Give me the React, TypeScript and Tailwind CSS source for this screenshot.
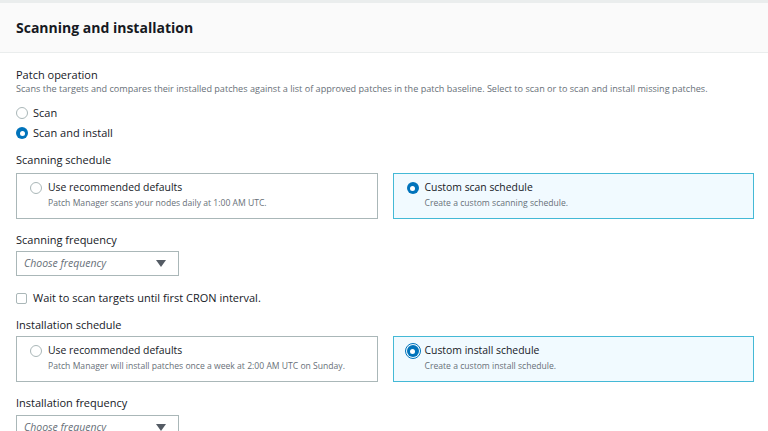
import React from "react";

function Radio({ on, focus }: { on?: boolean; focus?: boolean }) {
  if (on)
    return (
      <span className={`flex shrink-0 items-center justify-center rounded-full ${focus ? "w-[16px] h-[16px] -mx-[2px] border-[1.5px] border-[#0073bb]" : "w-[12px] h-[12px]"}`}>
        <span className="w-[12px] h-[12px] rounded-full bg-[#0073bb] flex items-center justify-center">
          <span className="w-[5px] h-[5px] rounded-full bg-white" />
        </span>
      </span>
    );
  return <span className="w-[12px] h-[12px] shrink-0 rounded-full border border-[#aab7b8] bg-white" />;
}

function Card({ sel, title, desc, focus }: { sel?: boolean; title: string; desc: string; focus?: boolean }) {
  return (
    <div className={`h-[46px] flex-1 border px-[13px] pt-[7px] ${sel ? "border-[#44b9d6] bg-[#f1faff]" : "border-[#aab7b8] bg-white"}`}>
      <div className="flex items-center gap-[6px] h-[14px]">
        <Radio on={sel} focus={focus} />
        <span className="text-[10.4px] text-[#16191f]">{title}</span>
      </div>
      <div className="pl-[18px] text-[8.6px] text-[#687078] mt-[2px]">{desc}</div>
    </div>
  );
}

function Select() {
  return (
    <div className="w-[163px] h-[25px] border border-[#aab7b8] flex items-center justify-between px-[7px] bg-white">
      <span className="italic text-[10.5px] text-[#687078]">Choose frequency</span>
      <svg width="10" height="8" viewBox="0 0 10 8" className="mr-[5px]"><path d="M0 0h10L5 7z" fill="#545b64" /></svg>
    </div>
  );
}

export default function App() {
  return (
    <div className="w-[768px] h-[431px] overflow-hidden bg-white text-[#16191f]" style={{ fontFamily: '"Open Sans", sans-serif' }}>
      <div className="h-[3px] bg-[#eaeded]" />
      <div className="h-[50px] bg-[#fafafa] border-b border-[#eaeded] flex items-center px-[16px]">
        <span className="text-[14px] font-bold">Scanning and installation</span>
      </div>
      <div className="px-[16px] pt-[14px]">
        <div className="text-[11px] leading-[16px]">Patch operation</div>
        <div className="text-[9.1px] text-[#687078] leading-[12px] whitespace-nowrap">Scans the targets and compares their installed patches against a list of approved patches in the patch baseline. Select to scan or to scan and install missing patches.</div>
        <div className="flex items-center gap-[5px] mt-[11px] h-[14px]"><Radio /><span className="text-[11px]">Scan</span></div>
        <div className="flex items-center gap-[5px] mt-[6px] h-[14px]"><Radio on /><span className="text-[11px]">Scan and install</span></div>
        <div className="text-[11px] mt-[12px] leading-[16px]">Scanning schedule</div>
        <div className="flex gap-[15px] mt-[5px] w-[738px]">
          <Card title="Use recommended defaults" desc="Patch Manager scans your nodes daily at 1:00 AM UTC." />
          <Card sel title="Custom scan schedule" desc="Create a custom scanning schedule." />
        </div>
        <div className="text-[11px] mt-[13px] leading-[16px]">Scanning frequency</div>
        <div className="mt-[3px]"><Select /></div>
        <div className="flex items-center gap-[6px] mt-[15px] h-[14px]">
          <span className="w-[11px] h-[11px] border border-[#aab7b8] rounded-[2px]" />
          <span className="text-[11px]">Wait to scan targets until first CRON interval.</span>
        </div>
        <div className="text-[11px] mt-[12px] leading-[16px]">Installation schedule</div>
        <div className="flex gap-[15px] mt-[3px] w-[738px]">
          <Card title="Use recommended defaults" desc="Patch Manager will install patches once a week at 2:00 AM UTC on Sunday." />
          <Card sel focus title="Custom install schedule" desc="Create a custom install schedule." />
        </div>
        <div className="text-[11px] mt-[13px] leading-[16px]">Installation frequency</div>
        <div className="mt-[4px]"><Select /></div>
      </div>
    </div>
  );
}
